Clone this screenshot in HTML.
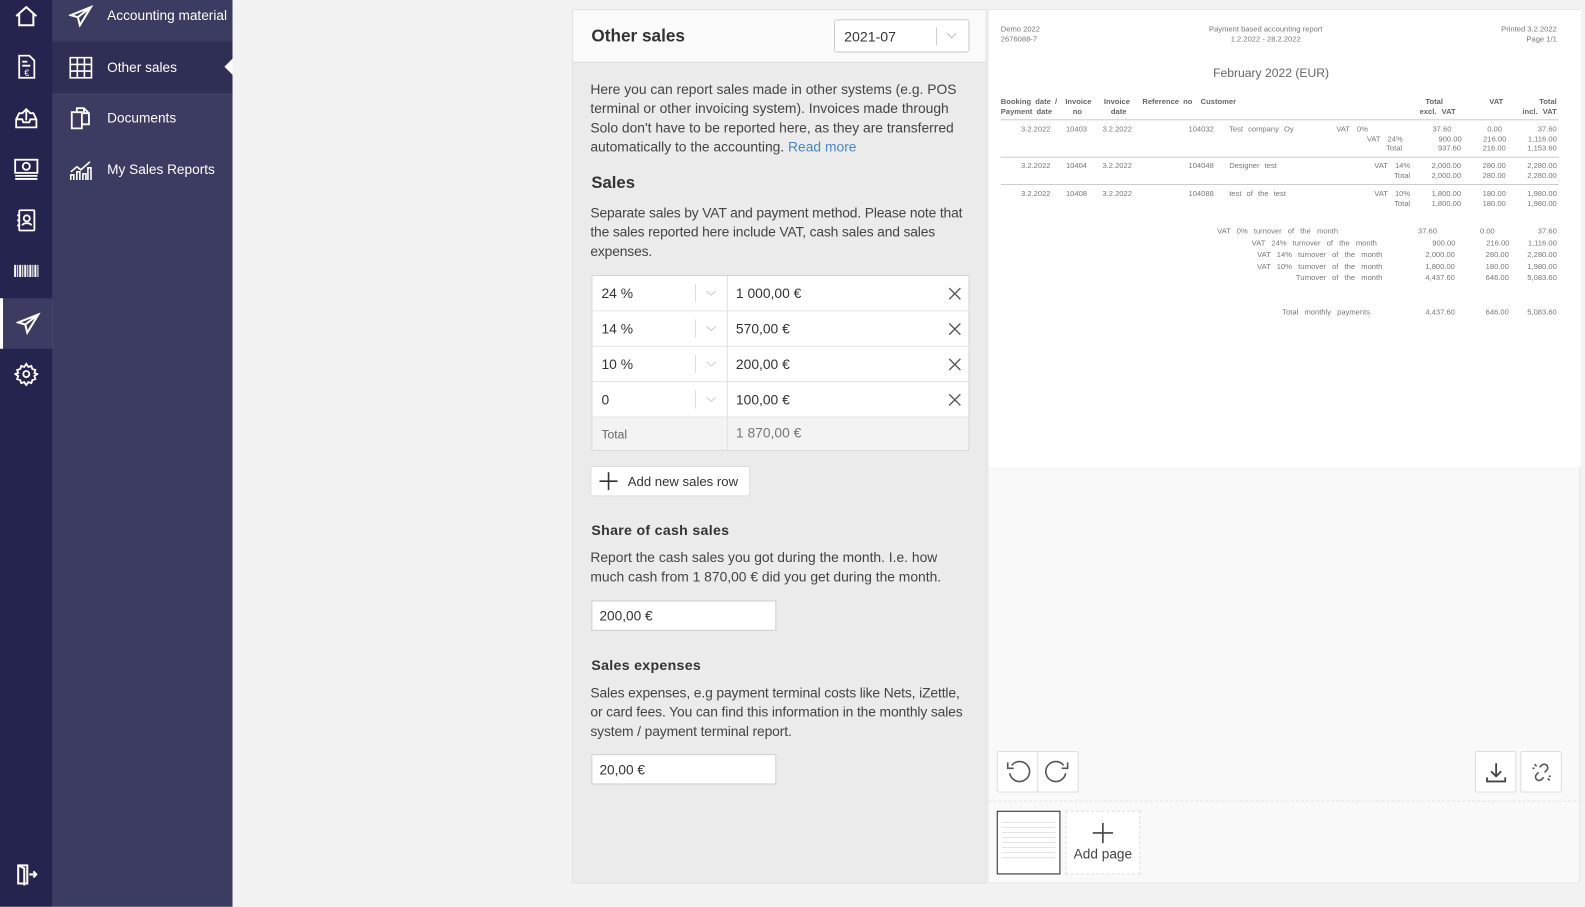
<!DOCTYPE html>
<html><head><meta charset="utf-8"><style>
*{box-sizing:border-box;margin:0;padding:0}
html,body{width:1585px;height:897px;overflow:hidden;background:#f2f2f2}
#w{position:absolute;left:0;top:0;width:1568px;height:888px;transform:scale(1.0109);transform-origin:0 0;font-family:"Liberation Sans",Arial,sans-serif;color:#333}
.ib{position:absolute;left:0;top:0;width:52px;height:897px;background:#25244f}
.ib .i{position:absolute;left:0;width:52px;height:50px;display:flex;align-items:center;justify-content:center}
.sn{position:absolute;left:52px;top:0;width:178px;height:897px;background:#3c3b61}
.sn .r{position:absolute;left:0;width:178px;height:51px;color:#fff;font-size:13.5px;display:flex;align-items:center;padding-left:54px}
.sn .r svg{position:absolute;left:16px}
.card{position:absolute;left:566px;top:9px;width:410px;height:865px;background:#ebebeb;border:1px solid #e0e0e0}
.hdr{height:52px;background:#fafafa;border-bottom:1px solid #ddd;position:relative}
.hdr h1{position:absolute;left:18px;top:16px;font-size:17px;font-weight:bold;color:#333}
.sel{position:absolute;background:#fff;border:1px solid #ccc;border-radius:3px}
p{font-size:13.7px;line-height:19px;color:#444}
h2{font-size:16.5px;font-weight:bold;color:#333}
h3{font-size:14px;font-weight:bold;color:#333;letter-spacing:.3px}
.tbl{position:absolute;left:18px;top:262px;width:374px;border:1px solid #d5d5d5;background:#fff}
.tr{height:35px;border-bottom:1px solid #e3e3e3;position:relative;font-size:13.7px}
.tr span{position:absolute;top:10px}
.inp{position:absolute;left:18px;width:183px;height:30px;background:#fff;border:1px solid #ccc;font-size:13.5px;padding:7px 7px}
.rp{position:absolute;left:977px;top:9px;width:586px;height:865px;background:#f9f9f9;border:1px solid #e6e6e6}
.doc{position:absolute;left:0;top:0;width:586px;height:452px;background:#fff}
.t{position:absolute;font-size:7.5px;color:#777;white-space:nowrap}
.btn{position:absolute;background:#fff;border:1px solid #ddd;border-radius:2px;display:flex;align-items:center;justify-content:center}
</style></head><body><div id="w">
<div class="ib">
<div class="i" style="top:-9px"><svg width="24" height="22" viewBox="0 0 24 22" fill="none" stroke="#fff" stroke-width="2"><path d="M2 11L12 2l10 9M5 9v11h14V9"/></svg></div>
<div class="i" style="top:41px"><svg width="18" height="24" viewBox="0 0 18 24" fill="none" stroke="#fff" stroke-width="1.8"><path d="M2 1h10l5 5v17H2z M5 7h5M5 11h8"/><text x="7" y="21" font-size="9" fill="#fff" stroke="none">€</text></svg></div>
<div class="i" style="top:92px"><svg width="24" height="22" viewBox="0 0 24 22" fill="none" stroke="#fff" stroke-width="1.8"><path d="M2 12l3-6h4M15 6h4l3 6v8H2v-8h6l1 3h6l1-3h6M12 13V2M8 6l4-4 4 4"/></svg></div>
<div class="i" style="top:142px"><svg width="26" height="24" viewBox="0 0 26 24" fill="none" stroke="#fff" stroke-width="1.8"><rect x="2" y="3" width="22" height="13"/><circle cx="13" cy="9.5" r="3.5"/><path d="M2 19h22M2 22h22"/></svg></div>
<div class="i" style="top:193px"><svg width="20" height="24" viewBox="0 0 20 24" fill="none" stroke="#fff" stroke-width="1.8"><rect x="3" y="2" width="15" height="20" rx="1"/><circle cx="10.5" cy="10" r="3"/><path d="M6 17c1-3 8-3 9 0M1 7h3M1 12h3M1 17h3"/></svg></div>
<div class="i" style="top:243px"><svg width="26" height="14" viewBox="0 0 26 14" fill="#fff"><rect x="1" y="1" width="2" height="12"/><rect x="4" y="1" width="1" height="12"/><rect x="6" y="1" width="2" height="12"/><rect x="9" y="1" width="1" height="12"/><rect x="11" y="1" width="2" height="12"/><rect x="14" y="1" width="1" height="12"/><rect x="16" y="1" width="2" height="12"/><rect x="19" y="1" width="1" height="12"/><rect x="21" y="1" width="2" height="12"/><rect x="24" y="1" width="1" height="12"/></svg></div>
<div class="i" style="top:295px;background:#3c3b61;border-left:3px solid #fff"><svg width="24" height="22" viewBox="0 0 24 22" fill="none" stroke="#fff" stroke-width="2"><path d="M22 2L2 10l7 2 2 8zM9 12L22 2"/></svg></div>
<div class="i" style="top:345px"><svg width="24" height="24" viewBox="0 0 24 24" fill="none" stroke="#fff" stroke-width="1.8"><circle cx="12" cy="12" r="3"/><path d="M12 2l2 3 3-1 1 3 3 1-1 3 3 1-3 2 1 3-3 1-1 3-3-1-2 3-2-3-3 1-1-3-3-1 1-3-3-2 3-1-1-3 3-1 1-3 3 1z"/></svg></div>
<div class="i" style="top:840px"><svg width="22" height="22" viewBox="0 0 22 22" fill="none" stroke="#fff" stroke-width="2"><path d="M3 2h9v18H3zM3 2l6 3v17M14 11h7M18 8l3 3-3 3"/></svg></div>
</div>
<div class="sn">
<div class="r" style="top:-10px"><svg width="24" height="22" viewBox="0 0 24 22" fill="none" stroke="#fff" stroke-width="2"><path d="M22 2L2 10l7 2 2 8zM9 12L22 2"/></svg>Accounting material</div>
<div class="r" style="top:41px;background:#2f2e55"><svg width="24" height="22" viewBox="0 0 24 22" fill="none" stroke="#fff" stroke-width="1.6"><rect x="1.5" y="1" width="21" height="20"/><path d="M8.5 1v20M15.5 1v20M1.5 7.7h21M1.5 14.3h21"/></svg>Other sales<div style="position:absolute;right:0;top:17px;width:0;height:0;border:8px solid transparent;border-right-color:#fff"></div></div>
<div class="r" style="top:91px"><svg width="22" height="24" viewBox="0 0 22 24" fill="none" stroke="#fff" stroke-width="1.8"><path d="M3 6h10v16H3zM8 6V2h7l5 5v11h-7M15 2v5h5"/></svg>Documents</div>
<div class="r" style="top:142px"><svg width="24" height="22" viewBox="0 0 24 22" fill="none" stroke="#fff" stroke-width="1.6"><path d="M2 13l6-5 4 3 9-8M2 21v-5h3v5M8 21v-8h3v8M14 21v-6h3v6M19 21V9h3v12"/></svg>My Sales Reports</div>
</div>

<div class="card">
<div class="hdr"><h1>Other sales</h1>
<div class="sel" style="left:258px;top:9px;width:134px;height:33px"><span style="position:absolute;left:9px;top:8px;font-size:14px">2021-07</span><div style="position:absolute;left:100px;top:7px;width:1px;height:18px;background:#ccc"></div><svg style="position:absolute;left:110px;top:12px" width="11" height="7" viewBox="0 0 11 7" fill="none" stroke="#bbb"><path d="M1 1l4.5 4.5L10 1"/></svg></div>
</div>
<p style="position:absolute;left:17px;top:69px;width:385px">Here you can report sales made in other systems (e.g. POS terminal or other invoicing system). Invoices made through Solo don't have to be reported here, as they are transferred automatically to the accounting. <span style="color:#4a86c5">Read more</span></p>
<h2 style="position:absolute;left:18px;top:162px">Sales</h2>
<p style="position:absolute;left:17px;top:191px;width:385px;letter-spacing:-.15px">Separate sales by VAT and payment method. Please note that the sales reported here include VAT, cash sales and sales expenses.</p>
<div class="tbl">
<div class="tr"><span style="left:9px">24 %</span><span style="left:142px">1 000,00 €</span></div>
<div class="tr"><span style="left:9px">14 %</span><span style="left:142px">570,00 €</span></div>
<div class="tr"><span style="left:9px">10 %</span><span style="left:142px">200,00 €</span></div>
<div class="tr"><span style="left:9px">0</span><span style="left:142px">100,00 €</span></div>
<div style="height:32px;background:#f3f3f3;position:relative;font-size:12px;color:#666"><span style="position:absolute;left:9px;top:10px">Total</span><span style="position:absolute;left:142px;top:8px;font-size:13.7px;color:#777">1 870,00 €</span></div>
<div style="position:absolute;left:133px;top:0;width:1px;height:173px;background:#e0e0e0"></div>
<svg style="position:absolute;left:0;top:0" width="374" height="140" fill="none" stroke="#aaa">
<g stroke="#ddd"><path d="M102 8v18M102 43v18M102 78v18M102 113v18"/></g>
<g stroke="#ccc"><path d="M113 15l4.5 4 4.5-4M113 50l4.5 4 4.5-4M113 85l4.5 4 4.5-4M113 120l4.5 4 4.5-4"/></g>
<g stroke="#555" stroke-width="1.3"><path d="M353 12l11 11M364 12l-11 11M353 47l11 11M364 47l-11 11M353 82l11 11M364 82l-11 11M353 117l11 11M364 117l-11 11"/></g>
</svg>
</div>
<div class="btn" style="left:17px;top:451px;width:158px;height:30px;justify-content:flex-start;font-size:13px;color:#333"><svg style="margin:0 10px 0 8px" width="18" height="18" viewBox="0 0 18 18" stroke="#333" stroke-width="1.6"><path d="M9 0v18M0 9h18"/></svg>Add new sales row</div>
<h3 style="position:absolute;left:18px;top:506px">Share of cash sales</h3>
<p style="position:absolute;left:17px;top:532px;width:378px">Report the cash sales you got during the month. I.e. how much cash from 1 870,00 € did you get during the month.</p>
<div class="inp" style="top:584px">200,00 €</div>
<h3 style="position:absolute;left:18px;top:640px">Sales expenses</h3>
<p style="position:absolute;left:17px;top:666px;width:376px;letter-spacing:-.12px">Sales expenses, e.g payment terminal costs like Nets, iZettle, or card fees. You can find this information in the monthly sales system / payment terminal report.</p>
<div class="inp" style="top:736px">20,00 €</div>
</div>

<div class="rp">
<div class="doc">
<div class="t" style="left:12px;top:14px;line-height:10px">Demo 2022<br>2676088-7</div>
<div class="t" style="left:218px;top:14px;line-height:10px;text-align:center">Payment based accounting report<br>1.2.2022 - 28.2.2022</div>
<div class="t" style="right:24px;top:14px;line-height:10px;text-align:right">Printed 3.2.2022<br>Page 1/1</div>
<div class="t" style="left:222px;top:55px;font-size:12px;color:#666">February 2022 (EUR)</div>
<div class="t" style="left:12px;top:86px;line-height:10px;font-weight:bold;color:#666;word-spacing:2px">Booking date / &nbsp;Invoice &nbsp; Invoice &nbsp; Reference no &nbsp;Customer<br>Payment date &nbsp; &nbsp; no &nbsp; &nbsp; &nbsp; date</div>
<div class="t" style="right:24px;top:86px;line-height:10px;font-weight:bold;color:#666;text-align:right;word-spacing:3px">Total &nbsp; &nbsp; &nbsp; &nbsp; VAT &nbsp; &nbsp; &nbsp; Total<br>excl. VAT &nbsp; &nbsp; &nbsp; &nbsp; &nbsp; &nbsp; incl. VAT</div>
<div style="position:absolute;left:12px;top:108px;width:552px;border-top:1px solid #ccc"></div>
<div class="t" style="left:32px;top:113px;word-spacing:3px">3.2.2022 &nbsp; 10403 &nbsp; 3.2.2022 &nbsp; &nbsp; &nbsp; &nbsp; &nbsp; 104032 &nbsp; Test company Oy</div>
<div class="t" style="right:24px;top:113px;line-height:9.5px;text-align:right;word-spacing:5px">VAT 0% &nbsp; &nbsp; &nbsp; &nbsp; 37.60 &nbsp; &nbsp; 0.00 &nbsp; &nbsp; 37.60<br>VAT 24% &nbsp; &nbsp; 900.00 &nbsp; 216.00 &nbsp; 1,116.00<br>Total &nbsp; &nbsp; 937.60 &nbsp; 216.00 &nbsp; 1,153.60</div>
<div style="position:absolute;left:12px;top:145px;width:552px;border-top:1px solid #ccc"></div>
<div class="t" style="left:32px;top:149px;word-spacing:3px">3.2.2022 &nbsp; 10404 &nbsp; 3.2.2022 &nbsp; &nbsp; &nbsp; &nbsp; &nbsp; 104048 &nbsp; Designer test</div>
<div class="t" style="right:24px;top:149px;line-height:9.5px;text-align:right;word-spacing:5px">VAT 14% &nbsp; 2,000.00 &nbsp; 280.00 &nbsp; 2,280.00<br>Total &nbsp; 2,000.00 &nbsp; 280.00 &nbsp; 2,280.00</div>
<div style="position:absolute;left:12px;top:172px;width:552px;border-top:1px solid #ccc"></div>
<div class="t" style="left:32px;top:177px;word-spacing:3px">3.2.2022 &nbsp; 10408 &nbsp; 3.2.2022 &nbsp; &nbsp; &nbsp; &nbsp; &nbsp; 104088 &nbsp; test of the test</div>
<div class="t" style="right:24px;top:177px;line-height:9.5px;text-align:right;word-spacing:5px">VAT 10% &nbsp; 1,800.00 &nbsp; 180.00 &nbsp; 1,980.00<br>Total &nbsp; 1,800.00 &nbsp; 180.00 &nbsp; 1,980.00</div>
<div class="t" style="right:24px;top:213px;line-height:11.5px;text-align:right;word-spacing:4px">VAT 0% turnover of the month &nbsp; &nbsp; &nbsp; &nbsp; &nbsp; &nbsp; 37.60 &nbsp; &nbsp; &nbsp; 0.00 &nbsp; &nbsp; &nbsp; 37.60<br>VAT 24% turnover of the month &nbsp; &nbsp; &nbsp; &nbsp; 900.00 &nbsp; &nbsp; 216.00 &nbsp; 1,116.00<br>VAT 14% turnover of the month &nbsp; &nbsp; &nbsp; 2,000.00 &nbsp; &nbsp; 280.00 &nbsp; 2,280.00<br>VAT 10% turnover of the month &nbsp; &nbsp; &nbsp; 1,800.00 &nbsp; &nbsp; 180.00 &nbsp; 1,980.00<br>Turnover of the month &nbsp; &nbsp; &nbsp; 4,437.60 &nbsp; &nbsp; 646.00 &nbsp; 5,083.60</div>
<div class="t" style="right:24px;top:294px;word-spacing:4px">Total monthly payments &nbsp; &nbsp; &nbsp; &nbsp; 4,437.60 &nbsp; &nbsp; 646.00 &nbsp; 5,083.60</div>
</div>
<div class="btn" style="left:8px;top:733px;width:81px;height:41px;justify-content:flex-start">
<svg width="80" height="41" viewBox="0 0 80 41" fill="none" stroke="#555" stroke-width="1.6"><path d="M40 0v41" stroke="#ddd" stroke-width="1"/><path d="M14 14a10 10 0 1 1-2 8"/><path d="M10 11v6h6"/><path d="M66 14a10 10 0 1 0 2 8"/><path d="M70 11v6h-6"/></svg></div>
<div class="btn" style="left:481px;top:733px;width:41px;height:41px"><svg width="22" height="22" viewBox="0 0 22 22" fill="none" stroke="#444" stroke-width="1.8"><path d="M11 2v13M6 10l5 5 5-5M2 16v4h18v-4"/></svg></div>
<div class="btn" style="left:526px;top:733px;width:41px;height:41px"><svg width="22" height="22" viewBox="0 0 22 22" fill="none" stroke="#555" stroke-width="1.6"><path d="M9 6l2-2a3.5 3.5 0 0 1 5 5l-2 2M8 11l-2 2a3.5 3.5 0 0 0 5 5l2-2M4 3l2 2M2 7h2M17 17l2 2M18 15h2"/></svg></div>
<div style="position:absolute;left:0;top:782px;width:586px;border-top:1px dashed #e3e3e3"></div>
<div style="position:absolute;left:8px;top:792px;width:63px;height:63px;border:1.5px solid #222;background:#fff"><div style="margin:6px 4px;height:40px;background:repeating-linear-gradient(#fff 0 4px,#e4e4e4 4px 5px)"></div></div>
<div style="position:absolute;left:76px;top:792px;width:74px;height:63px;border:1px dashed #ddd;background:#fff;text-align:center;font-size:13.5px;color:#444"><svg style="margin-top:10px" width="22" height="22" viewBox="0 0 22 22" stroke="#444" stroke-width="1.6"><path d="M11 1v20M1 11h20"/></svg><div style="margin-top:-1px">Add page</div></div>
</div>
</div></body></html>
